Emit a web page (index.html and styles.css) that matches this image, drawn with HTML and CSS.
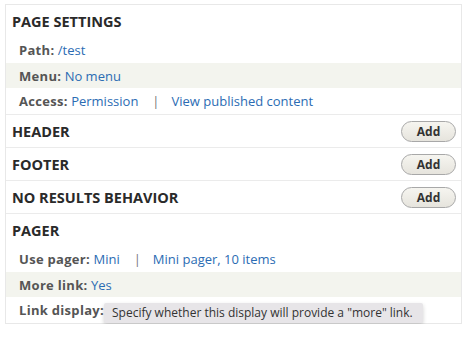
FILE: index.html
```html
<!DOCTYPE html>
<html lang="en">
<head>
  <meta charset="UTF-8" />
  <title>Page settings</title>
  <link rel="stylesheet" href="styles.css">
</head>
<body>
  <div class="panel">
    <!-- Page settings -->
    <div class="section">
      <div class="section-title">Page settings</div>
      <div class="row"><span class="label">Path:</span> <a href="#">/test</a></div>
      <div class="row odd"><span class="label">Menu:</span> <a href="#">No menu</a></div>
      <div class="row"><span class="label">Access:</span> <a href="#">Permission</a><span class="sep">|</span><a href="#">View published content</a></div>
    </div>

    <div class="section">
      <div class="section-title">Header <button class="add">Add</button></div>
    </div>
    <div class="section">
      <div class="section-title">Footer <button class="add">Add</button></div>
    </div>
    <div class="section">
      <div class="section-title">No results behavior <button class="add">Add</button></div>
    </div>

    <!-- Pager -->
    <div class="section">
      <div class="section-title">Pager</div>
      <div class="row"><span class="label">Use pager:</span> <a href="#">Mini</a><span class="sep">|</span><a href="#">Mini pager, 10 items</a></div>
      <div class="row odd"><span class="label">More link:</span> <a href="#">Yes</a></div>
      <div class="row has-tip">
        <span class="label">Link display:</span>
        <div class="tooltip">Specify whether this display will provide a "more" link.</div>
      </div>
    </div>
  </div>
</body>
</html>
```

FILE: styles.css
```css
/* base */
body {
  margin: 0;
  background: #fff;
  font-family: "Open Sans", "DejaVu Sans", sans-serif;
  font-size: 13px;
  color: #333;
}
a {
  color: #2b6cb3;
  text-decoration: none;
}

/* panel */
.panel {
  margin: 4px 12px 0 5px;
  border: 1px solid #e8e8e8;
  background: #fff;
}
.section + .section {
  border-top: 1px solid #ebebeb;
}
.section-title {
  display: flex;
  align-items: center;
  justify-content: space-between;
  box-sizing: border-box;
  height: 32px;
  padding: 1px 5px 0 6px;
  font-size: 14.5px;
  font-weight: 700;
  text-transform: uppercase;
  color: #2a2a2a;
}

/* rows */
.row {
  box-sizing: border-box;
  height: 25.67px;
  line-height: 24px;
  padding: 1px 0 0 13px;
  white-space: nowrap;
}
.row.odd {
  background: #f3f4ee;
}
.label {
  font-weight: 700;
  letter-spacing: 0.3px;
  color: #555;
}
.sep {
  margin: 0 12px 0 14px;
  color: #777;
}

/* add button */
.add {
  width: 55px;
  height: 21px;
  padding: 0;
  border: 1px solid #a8a8a8;
  border-radius: 11px;
  background: linear-gradient(#f6f5f0, #e6e4dd);
  font-family: inherit;
  font-size: 12px;
  font-weight: 700;
  color: #333;
  cursor: pointer;
}

/* tooltip */
.has-tip {
  position: relative;
}
.tooltip {
  position: absolute;
  left: 98px;
  top: 6px;
  height: 20px;
  line-height: 20px;
  padding: 0 10px 0 8px;
  background: #e7e5e8;
  border-radius: 2px;
  box-shadow: 0 2px 4px rgba(0,0,0,0.18);
  font-size: 12px;
  color: #333;
}
```
